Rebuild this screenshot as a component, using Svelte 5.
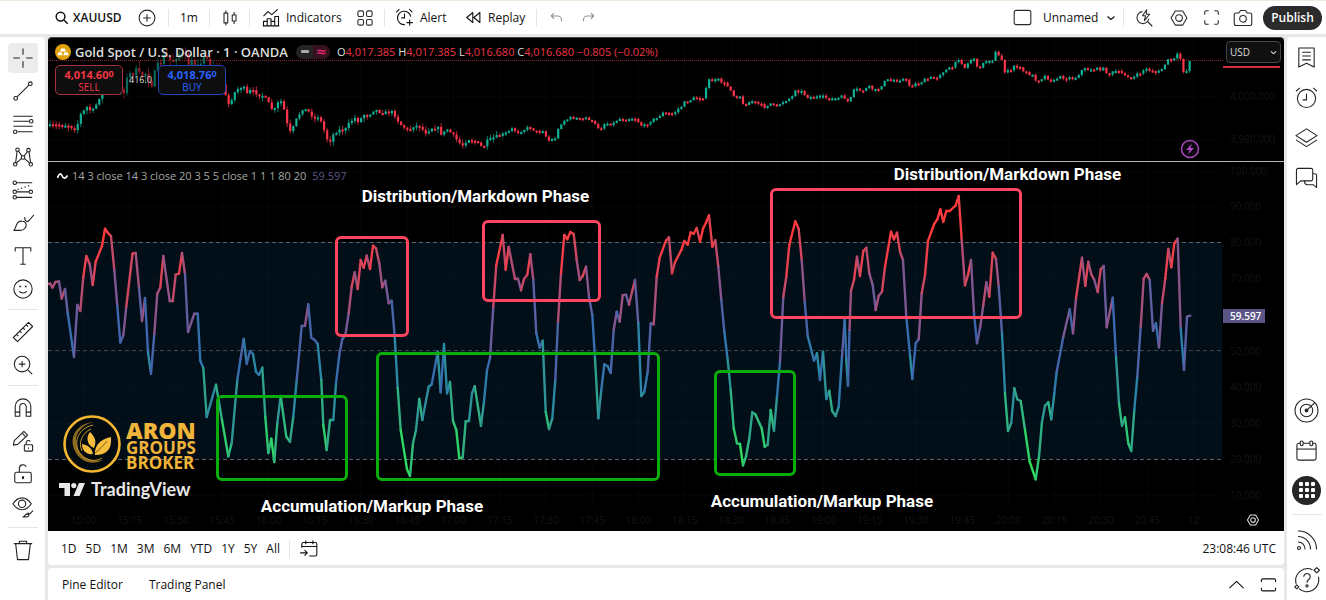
<script>
  // Plot space shared by both panes; the SVG stretches to the chart area.
  const plot = { x: 48, y: 38, w: 1236, h: 493 };
  const at = (x, y) =>
    `left:${(((x - plot.x) / plot.w) * 100).toFixed(3)}%;top:${(((y - plot.y) / plot.h) * 100).toFixed(3)}%;`;
  const size = (w, h) =>
    `width:${((w / plot.w) * 100).toFixed(3)}%;height:${((h / plot.h) * 100).toFixed(3)}%;`;

  const parse = (s) => s.trim().split(/\s+/).map((p) => p.split(',').map(Number));

  const osc = parse(`
    48,284 50,283.5 52.5,287.5 55.5,282 59,281.5 61.7,298.5 65,289 67.7,313 74,357 77.3,305 80.3,311 83.3,277 86.3,256
    89.7,264 92.7,285 95.7,261.7 102,246 105,228.7 108,233 111,236 114.3,270 117.3,306 120.3,342.5 123.3,335.5 126.3,306.7 132.5,253.7
    135.7,253 139,288 142,321 145,298 148,352.5 151,373.7 154.3,334 157.3,293.5 160.3,287.5 163.3,256 169.7,301 172.7,301
    175.7,274.7 179,273.7 182,253 185,274 188,332 194.3,313.7 197.7,313.7 200.3,360.7 203.3,368 206.7,417 216,384.7
    222,420 228.3,456.3 231.7,443 237.3,380 240.5,359 243.7,339 246.7,363.7 250,351 253,354 256,371.7 259,375 262.3,367.7 265.3,416.7
    268.3,453 271.3,438.7 274.3,462 277.3,423 280.7,396 286.3,436.7 290,441.7 293.3,416.7 296.7,380 301.7,326 305,325.7
    308.3,304.3 311.3,337.7 314.7,340 317.7,344 321.3,380 323.3,425 326.7,450 330,420 333.3,420 336,383.3 339.3,355
    342.3,339 345.3,335.7 348.7,313 351.7,286.7 354.7,272.3 357.7,289 360.7,260 363.7,267.7 366.7,255.7 370,269 373,245.7
    376,248.3 379.3,263.3 382.3,287.3 385.3,280.7 388.7,303.3 391.7,300.7 394.7,336.7 397.7,388.3 400.7,430 407,469.3
    410,476 413,443.3 416,430 419.3,399 422.3,420 428.7,386.7 431.7,384.3 437.7,351.7 440.7,392.3 444,344 447,393.3
    450,382 453,421 456.3,430 459.3,458.3 462.7,457.3 465.7,421.3 469,421 472,393.3 474.7,386.3 481,425.7 484,401.7
    487,370 490,358.3 493.3,306.7 496.3,265 502.7,235 505.7,269.7 508.7,247 515,279 518,278.7 521,290.3 524,279 527.3,274.7
    530.3,254.3 533.3,280 536.3,333.3 539.7,347.7 542.7,340.7 545.7,411.7 549,429 552.3,418.3 555.3,380 558,321.7 561,273.3
    564.3,235 567.3,239.3 570.3,232 573.7,234 576.7,260 579.7,280 582.7,276 586,266.7 589,296.7 592.3,315 595,358.3
    598.3,418.3 601.3,390 604.3,364.3 607.7,366.3 610.7,373 613.7,330 616.7,311.7 619.7,321.7 622.7,295.3 626,294.7
    629,304.7 632,291.7 635,280 638.3,323.3 641.3,396 644.3,391.7 647.7,371.7 650.7,323.3 653.7,324.3 656.7,276.7
    659.7,257.7 666,240.7 669,237.3 672,273.3 675,262.3 681.3,250 684.3,241 687.7,244.7 690.7,232.3 693.7,233.7 696.7,228
    700,241.7 703,228.7 706,222.7 709,215.3 712.3,246.7 715.3,240.3 718.3,266.7 721.3,300 724.3,331.7 727.7,360 730.7,390 733.7,428.3
    737,443.3 740,444 743,465.3 746,456.7 749.3,438.3 752.3,412.3 755.3,414.3 761.7,428.3 764.7,446.7 767.7,444.7
    770.7,410 774,430.7 777,396.7 780,361.7 783.3,296.7 786.3,276.7 789.3,245 795.3,221.3 798.7,229 801.7,260 804.7,301.7
    807.7,336 814,360.7 817,353.3 820,380 823,351.7 826.3,399 829.3,390.7 832.3,411.3 835.7,416 838.7,406.7 842,356.7
    844.7,319.3 846.3,360 848,385.7 849.5,330 851,290.7 854,280 857,256.7 860,276 863.3,251 866.3,247.7 869.3,273.3 872.7,285
    875.7,310 878.7,295.7 882,291.7 885,266.7 891,231.7 894,239.3 897,232.7 900,251.7 903,260 906.3,316.7 910,355 912.3,379
    915.7,343.3 918.7,339.3 921.7,293.3 925,275 928,241 934,224.3 937.3,219.3 940.3,209.3 943.3,221.7 946.3,211 949.7,211
    955.7,205.3 958.7,196 961.7,240 965,285.3 968,275 971,260 974,313.3 977,343.3 980.3,326.7 983.3,305 986.3,282.3
    989.3,296.7 992.7,252.7 996,259 998.7,286.7 1002,333.3 1005,393.3 1008,431 1011.3,422.7 1014.3,388.3 1017.3,399.3
    1020.7,401 1025,430 1029.7,461.7 1035.7,479.3 1039,456.7 1042,421.7 1045,405.7 1048.3,402.3 1051.3,419.3 1054.3,393.3 1056.7,371.7
    1063.3,336.7 1069.7,309.3 1073,333.3 1076,298.3 1082,257.7 1085.3,285.7 1088.3,261.7 1091.3,274.3 1094.3,280 1097.7,292
    1100.7,269.3 1103.7,266 1106.7,327.3 1112.7,297.7 1116,356.7 1119,403.3 1122,425.7 1125,417.3 1128.3,443.3 1131.3,451
    1134.3,410 1137.3,376.7 1140.7,326.7 1143.7,278.7 1146.7,274 1149.7,280 1153,330.7 1156,323.3 1159,347.3 1162,303.3
    1165.3,278.3 1168.3,249 1171.3,267.3 1174.3,243.3 1177.7,238.7 1180.7,328.3 1184,370 1187,316.7 1190.3,315.7`);

  const stops = [
    [228, 255, 58, 62], [262, 217, 70, 90], [292, 160, 82, 127], [318, 104, 92, 158],
    [348, 58, 104, 174], [376, 44, 128, 172], [402, 47, 154, 143], [440, 48, 188, 124], [476, 46, 222, 92]
  ];
  function tint(y) {
    if (y <= stops[0][0]) return `rgb(${stops[0].slice(1)})`;
    for (let i = 1; i < stops.length; i++) {
      if (y <= stops[i][0]) {
        const a = stops[i - 1], b = stops[i], t = (y - a[0]) / (b[0] - a[0]);
        return `rgb(${[1, 2, 3].map((k) => Math.round(a[k] + (b[k] - a[k]) * t))})`;
      }
    }
    return `rgb(${stops[stops.length - 1].slice(1)})`;
  }
  const segments = osc.slice(1).map(([x, y], i) => {
    const [px, py] = osc[i];
    const lean = y > py + 8 ? 20 : y < py - 8 ? -14 : 0;
    return { px, py, x, y, c: tint((y + py) / 2 + lean) };
  });

  const price = parse(`
    48,126 55,125 68,125 74,129 77,128 79,116 83,112 87,107 92,112 96,105 99,98 108,86 116,92 124,88 128,78 134,70 140,78
    146,72 152,82 156,74 160,62 166,56 172,62 178,51 186,60 192,65 200,58 208,60 216,66 222,80 226,98 229,105 232,98 236,90 243,86
    247,94 251,90 258,94 264,96 269,104 274,113 276,104 282,101 286,118 289,134 293,128 297,118 303,108 309,112 314,118
    319,116 324,130 329,144 332,136 338,130 345,130 350,122 355,118 359,122 363,115 372,113 374,109 382,113 393,112
    400,124 409,131 413,126 420,126 425,133 432,128 438,128 442,135 447,129 452,134 462,146 468,139 475,141 483,148
    487,141 495,137 507,133 512,129 518,132 530,127 537,132 543,130 548,141 555,138 560,125 563,121 573,117 582,120
    587,117 593,123 600,129 605,123 613,124 618,119 635,118 643,127 650,121 657,118 662,113 673,114 679,108 682,106
    685,102 695,98 703,97 707,87 710,77 713,82 717,79 725,84 730,88 734,96 741,96 743,105 752,101 765,107 770,103
    776,107 782,102 792,97 796,88 802,92 808,97 823,97 830,99 840,98 843,96 849,103 853,92 855,89 862,91 869,87 877,91
    883,83 888,80 905,79 910,86 918,83 930,78 937,77 942,72 953,67 959,58 965,68 970,60 974,58 977,68 982,65 988,59
    992,61 995,52 1002,60 1005,72 1011,71 1015,64 1023,71 1033,76 1037,81 1045,76 1053,82 1058,77 1075,78 1083,69
    1105,69 1108,75 1115,71 1123,74 1133,78 1140,73 1145,69 1160,72 1165,64 1170,58 1173,61 1177,55 1180,56 1182,71
    1187,71 1188,60 1190,60`);
  function priceAt(x) {
    for (let i = 1; i < price.length; i++) {
      if (x <= price[i][0]) {
        const [x0, y0] = price[i - 1], [x1, y1] = price[i];
        return y0 + ((y1 - y0) * (x - x0)) / (x1 - x0);
      }
    }
    return price[price.length - 1][1];
  }
  let seed = 7;
  const rand = () => (seed = (seed * 16807) % 2147483647) / 2147483647;
  const candles = [];
  let open = 125;
  for (let x = 50; x <= 1191; x += 3.08) {
    const early = x > 122 && x < 224;
    const close = priceAt(x) + (rand() - 0.5) * (early ? 12 : 3);
    const top = Math.min(open, close), h = Math.max(2, Math.abs(open - close));
    const reach = early ? 7 : x < 500 ? 4 : 2;
    candles.push({
      x, top, h, up: close < open, dim: early,
      hi: top - rand() * reach, lo: top + h + rand() * reach
    });
    open = close;
  }

  const priceLabels = [
    ['4,000.000', 96], ['3,980.000', 139], ['100.000', 171], ['90.000', 206], ['80.000', 242], ['70.000', 278],
    ['50.000', 351], ['40.000', 387], ['30.000', 423], ['20.000', 459], ['10.000', 495]
  ];
  const times = '15:00 15:15 15:30 15:45 16:00 16:15 16:30 16:45 17:00 17:15 17:30 17:45 18:00 18:15 18:30 18:45 19:00 19:15 19:30 19:45 20:00 20:15 20:30 20:45 12'.split(' ');

  const zones = [
    { kind: 'sell', x: 335, y: 236, w: 74, h: 101 },
    { kind: 'sell', x: 482, y: 220, w: 119, h: 82 },
    { kind: 'sell', x: 770, y: 188, w: 252, h: 131 },
    { kind: 'buy', x: 216, y: 395, w: 132, h: 86 },
    { kind: 'buy', x: 376, y: 352, w: 284, h: 129 },
    { kind: 'buy', x: 714, y: 370, w: 82, h: 106 }
  ];
  const notes = [
    ['Distribution/Markdown Phase', 475.5, 196],
    ['Distribution/Markdown Phase', 1007.5, 174],
    ['Accumulation/Markup Phase', 372, 506],
    ['Accumulation/Markup Phase', 822, 501]
  ];
  const ranges = ['1D', '5D', '1M', '3M', '6M', 'YTD', '1Y', '5Y', 'All'];

  const gem = '<path d="M7.5 3.5h9l5 8.5-5 8.500h-9L2.500 12z"/><circle cx="12" cy="12" r="4"/>';
  const icons = {
    search: '<circle cx="10.500" cy="10.500" r="7" stroke-width="2.400"/><path d="M16 16l6 6" stroke-width="2.400"/>',
    plus: '<circle cx="12" cy="12" r="10.500"/><path d="M12 7v10M7 12h10"/>',
    candles: '<path d="M4 5.500h5v13H4zM6.500 2v3.500M6.500 18.500V22M15 8h5v8h-5zM17.500 4v4M17.500 16v4"/>',
    indicators: '<path d="M2 9.500l6-6 5 4 8-7"/><path d="M2 22.500v-6h5v6M7 22.500V13h5v9.500M12 22.500v-6h5v6M17 22.500V10h5v12.500M1 22.500h22"/>',
    grid: '<rect x="2.500" y="2.500" width="7.500" height="7.500" rx="2"/><rect x="14" y="2.500" width="7.500" height="7.500" rx="2"/><rect x="2.500" y="14" width="7.500" height="7.500" rx="2"/><rect x="14" y="14" width="7.500" height="7.500" rx="2"/>',
    alert: '<path d="M20 11a8.500 8.500 0 1 0-7.500 10"/><path d="M12 7v5.500H8M1.500 5.500L5.500 1.500M18 1.500l4 4M18.500 14.500v8M14.500 18.500h8"/>',
    replay: '<path d="M11 5v14L2.500 12zM21 5v14l-8.500-7z"/>',
    undo: '<path d="M8 5L3.500 9.500 8 14M3.500 9.500H14a6 6 0 0 1 6 6V18"/>',
    redo: '<path d="M16 5l4.500 4.500L16 14M20.500 9.500H10a6 6 0 0 0-6 6V18"/>',
    layout: '<rect x="1.500" y="3" width="21" height="18" rx="2.500"/>',
    down: '<path d="M5 9l7 6 7-6"/>',
    up: '<path d="M2 17l10-9.500L22 17"/>',
    quick: '<path d="M10 3.500A8 8 0 1 0 18.500 13M17 17l6 6"/><path d="M15.500 1L10 9h4l-1.500 6.500L19.500 7H15z"/>',
    gem,
    full: '<path d="M2.500 8V4.500a2 2 0 0 1 2-2H8M16 2.500h3.500a2 2 0 0 1 2 2V8M21.500 16v3.500a2 2 0 0 1-2 2H16M8 21.500H4.500a2 2 0 0 1-2-2V16"/>',
    camera: '<path d="M3.500 6H7l2-3h6l2 3h3.500a2 2 0 0 1 2 2v11a2 2 0 0 1-2 2h-17a2 2 0 0 1-2-2V8a2 2 0 0 1 2-2z"/><circle cx="12" cy="13" r="4"/>',
    cross: '<path d="M12 1.500v7M12 15.500v7M1.500 12h7M15.500 12h7"/>',
    trend: '<circle cx="4" cy="20" r="2"/><circle cx="20" cy="4" r="2"/><path d="M5.500 18.500l13-13"/>',
    fib: '<path d="M1.500 3.500h21M1.500 9h17M1.500 14.500h21M6 20.500h16.500"/><circle cx="21" cy="9" r="1.900"/><circle cx="3.500" cy="20.500" r="1.900"/>',
    pattern: '<circle cx="6" cy="4" r="1.900"/><circle cx="18" cy="4.500" r="1.900"/><circle cx="12" cy="12.500" r="1.900"/><circle cx="3.500" cy="20" r="1.900"/><circle cx="20.500" cy="20" r="1.900"/><path d="M5.500 6L4 18M7 5.500l4 5.500M17 6l-4 5M18.500 6.500l1.800 11.500M10.500 13.500L5 18.500M13.500 13.500l5.500 5"/>',
    forecast: '<circle cx="3" cy="4" r="1.900"/><circle cx="3" cy="14" r="1.900"/><circle cx="20.500" cy="14" r="1.900"/><circle cx="3" cy="20" r="1.900"/><path d="M5 4h17M5 14h13.500M5 20h17"/><path d="M6 11.500l15-5" stroke-dasharray="1.500 2.500"/>',
    brush: '<path d="M2 20c2-2 2-4 3-6a6 6 0 0 1 6-4c3 0 4.500 2 4.500 4.500S13 20 9 20z"/><path d="M14 5.500c-.5 3 1 5 3.500 5L24 3"/>',
    text: '<path d="M3.500 7V3h17v4M12 3v18M9 21h6"/>',
    smile: '<circle cx="12" cy="12" r="10"/><path d="M8 14.500a4.500 3.500 0 0 0 8 0"/><path d="M9 8.500v1.500M15 8.500v1.500" stroke-width="2"/>',
    ruler: '<path d="M1.500 18L18 1.500 22.500 6 6 22.500zM5 14.500l2 2M8.500 11l2 2M12 7.500l2 2M15.500 4l2 2"/>',
    zoom: '<circle cx="11" cy="11" r="8.500"/><path d="M17.500 17.500l4.500 4.500M11 7.500v7M7.500 11h7"/>',
    magnet: '<path d="M3.500 21V10.500a8.500 8.500 0 0 1 17 0V21h-5V10.500a3.500 3.500 0 0 0-7 0V21zM3.500 16.500h5M15.500 16.500h5"/>',
    penlock: '<path d="M1.500 16.500l1-5L13 1.500l4 4L6.500 15.500zM11 3.500l4 4"/><rect x="13.500" y="16" width="9" height="7" rx="1"/><path d="M15.500 16v-2.500a2.500 2.500 0 0 1 4.500-1M18 19v1.500"/>',
    lock: '<rect x="3" y="10" width="18" height="11.500" rx="2"/><path d="M8 10V6a4 4 0 0 1 7.500-2"/><path d="M12 14.500v3" stroke-width="2.400"/>',
    eye: '<path d="M1 8.500C4 4 8 2 11 2s7 2 10 6.500C18 13 14 15 11 15S4 13 1 8.500z"/><circle cx="11" cy="8.500" r="4"/><path d="M12 23c2-.5 1.500-3 4.500-3.500 2 0 2.500 2 1 3zM17.500 18c0 1.500 1.500 2 2.500 1l3-3"/>',
    trash: '<path d="M2 5h20M8 5V2.500h8V5M4 5l2 17.500h12L20 5"/>',
    watch: '<path d="M4 2h16v20l-8-4-8 4zM7.500 6.500h9M7.500 10.500h9M7.500 14.500h9"/>',
    clock: '<circle cx="12" cy="13" r="9.500"/><path d="M12 8v6.500H8M1 5.500L5 2M19 2l4 3.500"/>',
    layers: '<path d="M12 3l11 7-11 7L1 10zM1 14.500l11 7 11-7"/>',
    chat: '<path d="M3 2.500h13.500a2 2 0 0 1 2 2v9a2 2 0 0 1-2 2H6l-4.500 4V4.500a2 2 0 0 1 2-2z"/><path d="M18.500 8h2a2 2 0 0 1 2 2v12.500L19 19.500h-6a3 3 0 0 1-3-3v-1"/>',
    target: '<circle cx="12" cy="12" r="11"/><circle cx="12" cy="12" r="6"/><circle cx="12" cy="12" r="1.300" fill="currentColor"/><path d="M12 12l8-7.500"/>',
    calendar: '<rect x="2" y="4.500" width="20" height="17.500" rx="2"/><path d="M2 10.500h20"/><rect x="5.500" y="2" width="3" height="5" rx="1.400" fill="#fff"/><rect x="15.500" y="2" width="3" height="5" rx="1.400" fill="#fff"/>',
    feed: '<circle cx="4" cy="20" r="1.500"/><path d="M3 14a7 7 0 0 1 7 7.500M3 8.500a12.500 12.500 0 0 1 12.500 13M3 3a18 18 0 0 1 18.500 18.500"/>',
    help: '<path d="M17 2.500A11 11 0 0 0 2 15.500M4.500 20A11 11 0 0 0 22.500 9"/><path d="M9 9a3 3 0 1 1 4.500 2.600C12.500 12.300 12 13 12 14.500"/><circle cx="12" cy="17.500" r="1"/><path d="M21 .5l2.500 2.500L21 5.500 18.500 3zM2.500 16.500l1.800 1.800-1.800 1.800L.7 18.300z"/>',
    goto: '<path d="M3.500 11V6.500a2 2 0 0 1 2-2h15a2 2 0 0 1 2 2v13a2 2 0 0 1-2 2H13M3.500 9.500h19M8.500 2v4.500M17.500 2v4.500M1.500 17.500h8.500M7 14l3.500 3.500L7 21"/>',
    window: '<path d="M2 8.500V6a2 2 0 0 1 2-2h16a2 2 0 0 1 2 2v2.500M2 16.500V19a2 2 0 0 0 2 2h16a2 2 0 0 0 2-2v-2.500"/>'
  };
  const tools = [
    [['cross', 'Cross'], ['trend', 'Trend line'], ['fib', 'Fib retracement'], ['pattern', 'Patterns'], ['forecast', 'Forecasting'], ['brush', 'Brush'], ['text', 'Text'], ['smile', 'Icons']],
    [['ruler', 'Measure'], ['zoom', 'Zoom in']],
    [['magnet', 'Magnet'], ['penlock', 'Stay in drawing mode'], ['lock', 'Lock drawings'], ['eye', 'Hide drawings']],
    [['trash', 'Remove']]
  ];
</script>

{#snippet icon(name, px = 20)}
  <svg class="icon" width={px} height={px} viewBox="0 0 24 24" fill="none" stroke="currentColor"
    stroke-width={26 / px} stroke-linejoin="round" aria-hidden="true">{@html icons[name]}</svg>
{/snippet}

<div class="app">
  <header class="topbar">
    <button class="symbol">{@render icon('search', 15)}<b>XAUUSD</b></button>
    <button class="ib add" aria-label="Compare">{@render icon('plus', 18)}</button>
    <i class="sep"></i>
    <button class="interval">1m</button>
    <i class="sep"></i>
    <button class="ib w39" aria-label="Chart type">{@render icon('candles', 18)}</button>
    <i class="sep"></i>
    <button class="labelled indicators">{@render icon('indicators', 18)}Indicators</button>
    <button class="ib w39" aria-label="Templates">{@render icon('grid', 18)}</button>
    <i class="sep"></i>
    <button class="labelled alert">{@render icon('alert', 19)}Alert</button>
    <button class="labelled replay">{@render icon('replay', 17)}Replay</button>
    <i class="sep"></i>
    <button class="ib w39 faint" aria-label="Undo">{@render icon('undo', 15)}</button>
    <button class="ib w24 faint" aria-label="Redo">{@render icon('redo', 15)}</button>
    <div class="grow"></div>
    <button class="ib" aria-label="Layout">{@render icon('layout', 19)}</button>
    <button class="labelled unnamed">Unnamed{@render icon('down', 12)}</button>
    <i class="sep"></i>
    <button class="ib w39" aria-label="Quick search">{@render icon('quick', 18)}</button>
    <button class="ib" aria-label="Settings">{@render icon('gem', 20)}</button>
    <button class="ib" aria-label="Fullscreen">{@render icon('full', 17)}</button>
    <button class="ib" aria-label="Snapshot">{@render icon('camera', 20)}</button>
    <button class="publish">Publish</button>
  </header>

  <div class="body">
    <nav class="tools" aria-label="Drawing tools">
      {#each tools as group, g}
        {#if g}<hr />{/if}
        {#each group as [name, label], i}
          <button class:active={g === 0 && i === 0} aria-label={label}><span>{@render icon(name, 22)}</span></button>
        {/each}
      {/each}
    </nav>

    <main>
      <section class="chart">
        <svg class="plot" viewBox="48 38 1236 493" preserveAspectRatio="none" aria-hidden="true">
          <rect x="48" y="242" width="1174" height="217" fill="#020e18" />
          {#each times as _, i}
            <line x1={83.5 + i * 46.25} x2={83.5 + i * 46.25} y1="38" y2="505" stroke="#fff" stroke-opacity=".025" />
          {/each}
          {#each priceLabels as [, y]}
            <line x1="48" x2="1222" y1={y + 0.5} y2={y + 0.5} stroke="#fff" stroke-opacity=".02" />
          {/each}
          <g stroke-dasharray="4 3">
            <line x1="48" x2="1222" y1="242.5" y2="242.5" stroke="#5d636b" />
            <line x1="48" x2="1222" y1="350.5" y2="350.5" stroke="#3b434b" />
            <line x1="48" x2="1222" y1="459.5" y2="459.5" stroke="#5d636b" />
          </g>
          <line x1="48" x2="1223" y1="60.5" y2="60.5" stroke="#8c2230" stroke-dasharray="1 1" />
          {#each candles as c}
            <g fill={c.up ? '#12b095' : '#fb3449'} opacity={c.dim ? 0.6 : 1}>
              <rect x={c.x - 0.5} y={c.hi} width="1" height={c.lo - c.hi} opacity=".7" />
              <rect x={c.x - 1.1} y={c.top} width="2.2" height={c.h} />
            </g>
          {/each}
          <line x1="48" x2="1284" y1="161.5" y2="161.5" stroke="#b4b4b8" />
          <g stroke-width="2.400" stroke-linecap="round">
            {#each segments as s}
              <line x1={s.px} y1={s.py} x2={s.x} y2={s.y} stroke={s.c} />
            {/each}
          </g>
        </svg>

        {#each priceLabels as [t, y]}<span class="axis" style={at(1230, y)}>{t}</span>{/each}
        {#each times as t, i}<span class="axis time" style={at(83.5 + i * 46.25, 520)}>{t}</span>{/each}
        {#each zones as z}<div class="zone {z.kind}" style={at(z.x, z.y) + size(z.w, z.h)}></div>{/each}
        {#each notes as [t, x, y]}<strong class="note" style={at(x, y)}>{t}</strong>{/each}
        <span class="value" style={at(1223, 316)}>59.597</span>

        <svg class="flash" style={at(1190, 149)} width="20" height="20" viewBox="0 0 20 20" aria-hidden="true">
          <circle cx="10" cy="10" r="8.500" fill="#0c050e" stroke="#ab47bc" stroke-width="1.500" />
          <path d="M12 4.500L6 11h3.500L8 15.500 14 9h-3.500z" fill="#ab47bc" />
        </svg>

        <div class="legend">
          <div class="title">
            <svg width="16" height="16" viewBox="0 0 16 16" aria-hidden="true">
              <circle cx="8" cy="8" r="8" fill="#e0a10b" />
              <path d="M6.200 4.500h3.600l1.200 3H5zM3.400 8.300h3.300l1 3H2.300zM9.300 8.300h3.300l1.100 3H8.300z" fill="#fff" />
            </svg>
            <h1>Gold Spot / U.S. Dollar · 1 · OANDA</h1>
            <span class="pill"><i></i><em>≈</em></span>
            <span class="ohlc">O<b>4,017.385</b> H<b>4,017.385</b> L<b>4,016.680</b> C<b>4,016.680</b> <b>−0.805 (−0.02%)</b></span>
          </div>
          <div class="quotes">
            <button class="quote ask"><b>4,014.60<sup>0</sup></b>SELL</button>
            <span>416.0</span>
            <button class="quote bid"><b>4,018.76<sup>0</sup></b>BUY</button>
          </div>
        </div>

        <div class="study" style={at(57, 176)}>
          <svg width="11" height="8" viewBox="0 0 11 8" aria-hidden="true"><path d="M.5 6C2 1 4 1 5.200 4S8.500 7 10.500 3.500" fill="none" stroke="#fff" stroke-width="1.700" /></svg>
          <span>14 3 close 14 3 close 20 3 5 5 close 1 1 1 80 20</span><b>59.597</b>
        </div>

        <div class="currency">
          <select aria-label="Currency"><option>USD</option></select>
          {@render icon('down', 9)}
        </div>

        <div class="brand" style={at(63, 415)}>
          <svg width="58" height="58" viewBox="0 0 58 58" aria-hidden="true">
            <circle cx="29" cy="29" r="27.500" fill="#030a10" stroke="#f2b632" stroke-width="2.600" />
            <path d="M31 7C14 8 5 22 12 36c5 11 18 15 28 9C26 48 14 40 13 27 12 18 20 9 31 7z" fill="#8c6a1e" />
            <g fill="none" stroke="#c8962b">
              <path d="M30 10C16 13 10 26 16 37c5 8 15 11 23 6" />
              <path d="M28 14c-9 4-13 14-9 22" />
            </g>
            <path d="M27 17c5 5 7 9 4 16-6-2-9-10-4-16zM19 29c6 1 10 4 11 10-6 1-11-3-11-10zM48 22c1 12-4 18-16 18-1-9 5-16 16-18z" fill="#f6bd3f" />
            <path d="M44 26c-4 5-8 9-12 12" stroke="#7b5a14" fill="none" />
          </svg>
          <p><b>ARON</b><span>GROUPS</span><span>BROKER</span></p>
        </div>
        <div class="tv" style={at(59, 489)}>
          <svg width="26" height="13" viewBox="0 0 26 13" aria-hidden="true" fill="#e8e8e8"><path d="M0 0h11v13H5.500V5H0zM20 0h6l-5.500 13h-6z" /><circle cx="14.800" cy="2.600" r="2.600" /></svg>
          <span>TradingView</span>
        </div>
        <button class="gear" style={at(1253.5, 520)} aria-label="Scale settings">{@render icon('gem', 14)}</button>
      </section>

      <footer class="ranges">
        {#each ranges as r}<button>{r}</button>{/each}
        <i class="sep"></i>
        <button aria-label="Go to date">{@render icon('goto', 19)}</button>
        <div class="grow"></div>
        <time>23:08:46 UTC</time>
      </footer>
      <footer class="tabs">
        <button>Pine Editor</button>
        <button>Trading Panel</button>
        <div class="grow"></div>
        <button aria-label="Open panel">{@render icon('up', 17)}</button>
        <button aria-label="Maximize panel">{@render icon('window', 17)}</button>
      </footer>
    </main>

    <aside class="side">
      <button aria-label="Watchlist">{@render icon('watch', 23)}</button>
      <button aria-label="Alerts">{@render icon('clock', 23)}</button>
      <button aria-label="Object tree">{@render icon('layers', 23)}</button>
      <button aria-label="Chats">{@render icon('chat', 23)}</button>
      <div class="grow"></div>
      <button aria-label="Screeners">{@render icon('target', 25)}</button>
      <button aria-label="Calendar">{@render icon('calendar', 23)}</button>
      <button aria-label="Products"><span class="dots">{#each Array(9) as _}<i></i>{/each}</span></button>
      <hr />
      <button aria-label="News">{@render icon('feed', 24)}</button>
      <button aria-label="Help">{@render icon('help', 26)}</button>
    </aside>
  </div>
</div>

<style>
  :global(body) { margin: 0; background: #e9e8e8; }
  .app {
    display: flex; flex-direction: column; min-height: 100vh; box-sizing: border-box;
    font: 12px/16px "Trebuchet MS", "Open Sans", sans-serif; color: #111;
  }
  button {
    display: inline-flex; align-items: center; justify-content: center; padding: 0; border: 0;
    background: none; color: inherit; font: inherit; cursor: pointer;
  }
  .icon { display: block; flex: none; }
  .grow { flex: 1; }
  .topbar {
    display: flex; align-items: center; height: 34px; box-sizing: border-box; padding: 0 4px 0 54px;
    border-top: 1px solid #efe8dc; background: #fff; font-weight: 500;
  }
  .sep { width: 1px; height: 18px; background: #e4e4e4; }
  .symbol { gap: 4px; width: 66px; justify-content: flex-start; }
  .symbol b { font-weight: 600; }
  .ib { width: 32px; height: 30px; color: #2a2a2a; }
  .add { width: 48px; padding-left: 6px; box-sizing: border-box; }
  .w39 { width: 39px; }
  .w24 { width: 24px; }
  .faint { color: #8f8f8f; }
  .interval { width: 40px; }
  .labelled { gap: 6px; justify-content: flex-start; padding-left: 12px; box-sizing: border-box; }
  .indicators { width: 95px; }
  .alert { width: 68px; padding-left: 10px; }
  .replay { width: 83px; }
  .unnamed { width: 85px; padding-left: 5px; gap: 7px; }
  .publish {
    width: 59px; height: 24px; margin-left: 4px; border-radius: 12px; background: #2b2b2b; color: #fff; font-weight: 600;
  }

  .body { display: flex; flex: 1; gap: 3px; margin-top: 3px; }
  .tools {
    display: flex; flex-direction: column; align-items: center; width: 45px; flex: none; box-sizing: border-box;
    padding-top: 4px; background: #fff; border-radius: 0 4px 0 0; color: #222;
  }
  .tools button { width: 30px; height: 33px; }
  .tools span { display: grid; place-items: center; width: 30px; height: 30px; border-radius: 4px; }
  .tools .active span { background: #ececec; }
  hr { width: 30px; height: 1px; margin: 4px 0 5px; border: 0; background: #e6e6e6; }

  main { display: flex; flex-direction: column; flex: 1; min-width: 0; }
  .chart { position: relative; flex: 1; overflow: hidden; background: #000; border-radius: 4px 4px 0 0; border-top: 1px solid #444; }
  .plot { position: absolute; inset: 0; width: 100%; height: 100%; }
  .axis { position: absolute; transform: translateY(-50%); font-size: 10px; color: #141414; }
  .time { transform: translate(-50%, -50%); }
  .zone { position: absolute; box-sizing: border-box; border: 3px solid; border-radius: 6px; }
  .sell { border-color: #ff4560; }
  .buy { border-color: #0aad0a; }
  .note {
    position: absolute; transform: translate(-50%, -50%); white-space: nowrap;
    font: 700 17px/18px Roboto, sans-serif; color: #fff;
  }
  .value {
    position: absolute; transform: translateY(-50%); width: 42px; box-sizing: border-box; padding-left: 7px;
    background: #5b5586; color: #fff; font-size: 10px; line-height: 14px; font-weight: 600;
  }
  .flash { position: absolute; transform: translate(-50%, -50%); }
  .legend { position: absolute; left: 7px; top: 4px; }
  .title { display: flex; align-items: center; height: 19px; white-space: nowrap; color: #dedede; }
  h1 { width: 213px; margin: 0 8px 0 4px; font-size: 13px; line-height: 18px; font-weight: 600; }
  .pill { display: grid; grid-template-columns: 1fr 1fr; width: 34px; height: 14px; overflow: hidden; border-radius: 7px; background: #242424; }
  .pill i { align-self: center; justify-self: center; width: 8px; height: 3px; border-radius: 1px; background: #aaa; }
  .pill em { background: #34111f; color: #e0246b; font: 700 13px/13px "DejaVu Sans", sans-serif; text-align: center; }
  .ohlc { display: flex; gap: 5px; margin-left: 7px; font-size: 11px; display: block; }
  .ohlc b { font-weight: 500; color: #ee3547; }
  .quotes { display: flex; align-items: center; margin-top: 4px; color: #ddd; font-size: 9px; }
  .quotes > span { width: 35px; text-align: center; }
  .quote {
    flex-direction: column; width: 68px; height: 30px; box-sizing: border-box; border: 1px solid; border-radius: 5px;
    background: #0e0e0e; font-size: 10px; line-height: 11px;
  }
  .quote b { font-size: 11px; line-height: 14px; font-weight: 700; }
  sup { font-size: 9px; line-height: 0; vertical-align: 2px; }
  .ask { border-color: #a5303c; color: #f23645; }
  .bid { border-color: #2146b8; color: #2962ff; }
  .study {
    position: absolute; transform: translateY(-50%); display: flex; align-items: center; gap: 4px;
    font-size: 11px; color: #a6a6a6; white-space: nowrap;
  }
  .study b { margin-left: 2px; font-weight: 400; color: #5b5586; }
  .currency { position: absolute; right: 3px; top: 3px; width: 55px; color: #ddd; }
  .currency select {
    width: 100%; height: 22px; padding: 0 3px; border: 1px solid #444; border-radius: 4px; appearance: none;
    background: #101010; color: inherit; font: inherit; font-size: 10px;
  }
  .currency .icon { position: absolute; right: 3px; top: 7px; pointer-events: none; }
  .currency :global(svg) { position: absolute; right: 3px; top: 7px; pointer-events: none; }
  .currency::after { content: ""; display: block; height: 2px; margin: 3px 1px 0 -3px; background: #d32c3d; }
  .brand { position: absolute; display: flex; align-items: center; gap: 5px; color: #f0b43a; }
  .brand p { display: flex; flex-direction: column; margin: 3px 0 0; font: 700 17px/15px "Open Sans", sans-serif; }
  .brand b { font-size: 23px; line-height: 19px; }
  .tv { position: absolute; transform: translateY(-50%); display: flex; align-items: center; gap: 6px; color: #e8e8e8; font: 700 18px/20px Lato, sans-serif; }
  .gear { position: absolute; transform: translate(-50%, -50%); color: #ddd; }

  .ranges, .tabs { display: flex; align-items: center; background: #fff; box-sizing: border-box; }
  .ranges { height: 34px; gap: 9px; padding: 1px 8px 0 13px; border-radius: 0 0 4px 4px; }
  .tabs { height: 32px; margin-top: 3px; gap: 15px; padding: 1px 7px 0 14px; border-radius: 4px 4px 0 0; }
  .tabs button:nth-child(2) { margin-left: 11px; }

  .side {
    display: flex; flex-direction: column; align-items: center; width: 39px; flex: none; background: #fff;
    border-radius: 4px 0 0 0; color: #222;
  }
  .side button { width: 38px; height: 40px; }
  .dots {
    display: grid; grid-template-columns: repeat(3, 4px); gap: 2px; place-content: center;
    width: 29px; height: 29px; border-radius: 50%; background: #262626;
  }
  .dots i { height: 4px; border-radius: 1px; background: #fff; }
</style>
